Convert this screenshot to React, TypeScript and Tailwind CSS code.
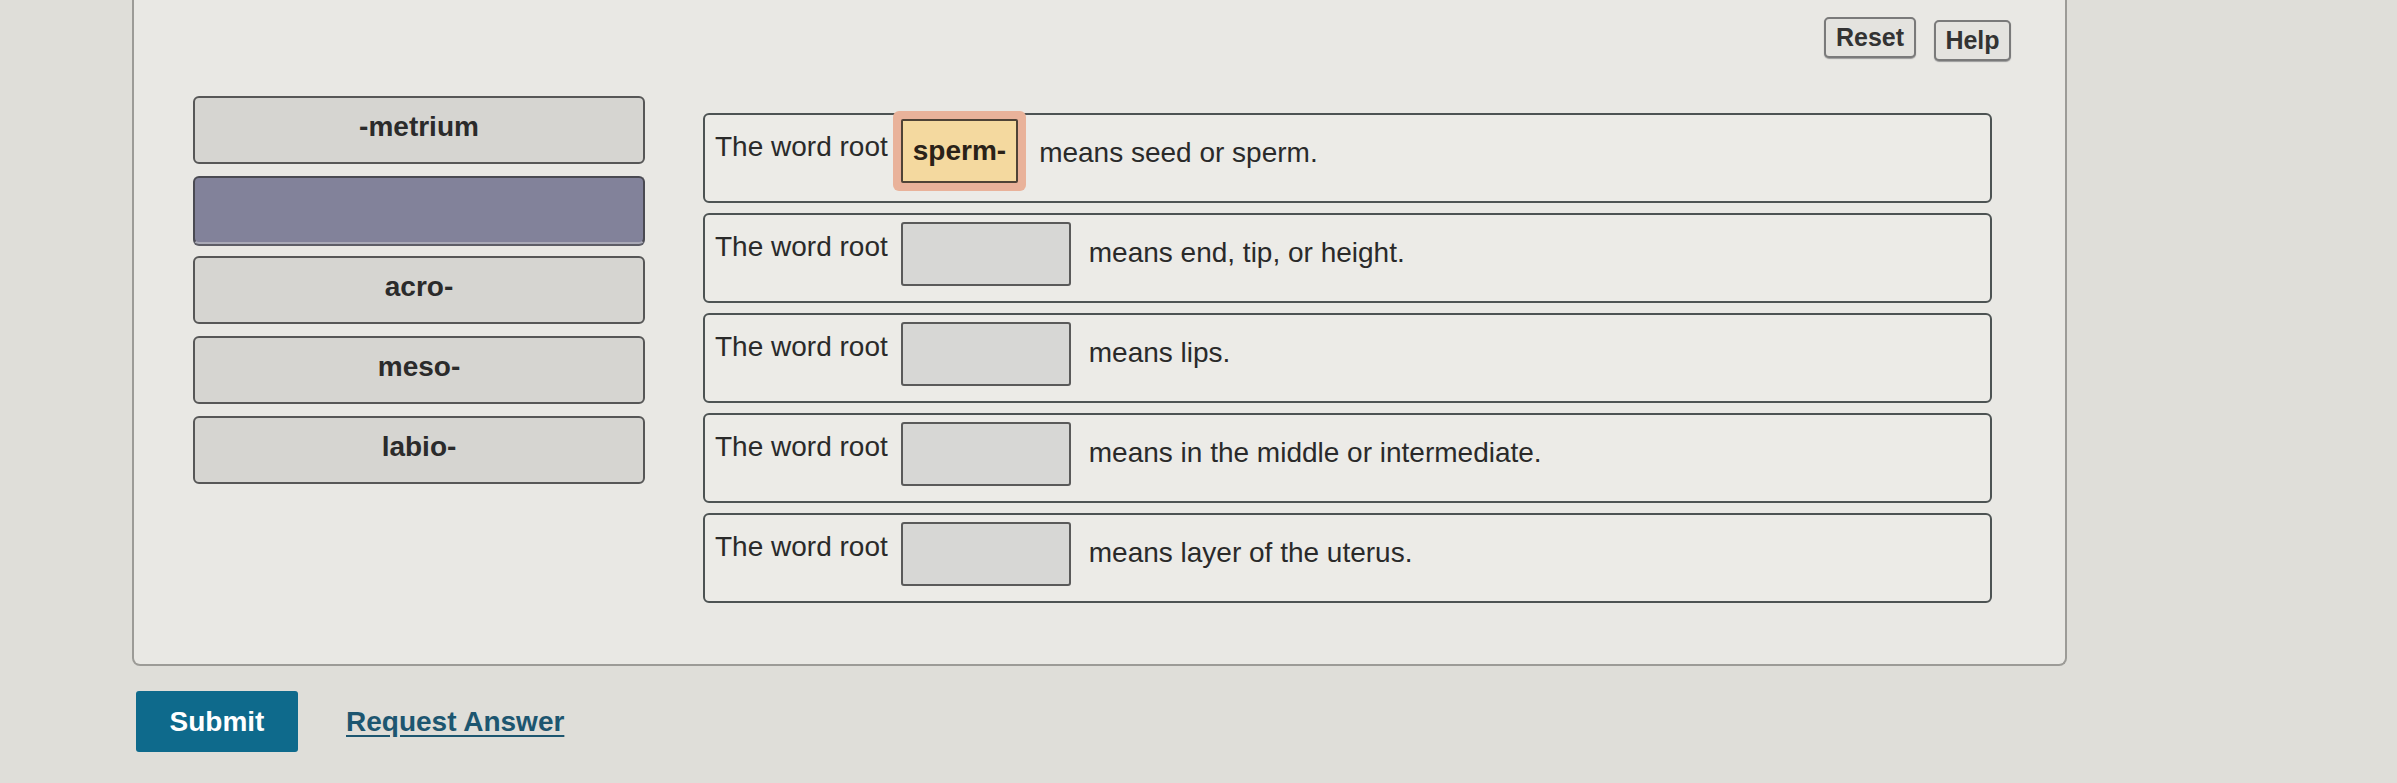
import React from "react";

const font = { fontFamily: '"Liberation Sans", Arial, Helvetica, sans-serif' };

function Tile({ label, dark }: { label?: string; dark?: boolean }) {
  if (dark) {
    return (
      <div className="h-[68px] w-[452px] rounded-[6px] border-2 border-[#4a4a52] border-b-[#a9a9b6] bg-[#82829a] shadow-[0_2px_0_#5d5d66]" />
    );
  }
  return (
    <div className="flex h-[68px] w-[452px] justify-center rounded-[6px] border-2 border-[#575757] bg-[#d6d5d1] pt-[13px] text-[28px] font-bold leading-[32px] text-[#2b2b2b]">
      {label}
    </div>
  );
}

function Row({ text, chip }: { text: string; chip?: string }) {
  return (
    <div className="flex h-[90px] w-[1289px] items-start rounded-[6px] border-2 border-[#4d5353] bg-[#ecebe7] pl-[10px] text-[28px] leading-[32px] text-[#2a2a2a]">
      <span className="mt-[16px] whitespace-nowrap">The word root</span>
      {chip ? (
        <div className="ml-[5px] mt-[-4px] rounded-[6px] bg-[#e9b29a] p-[8px]">
          <div className="flex h-[64px] items-center rounded-[2px] border-2 border-[#4f4336] bg-[#f4d99f] px-[10px] font-bold text-[#2a2218]">
            {chip}
          </div>
        </div>
      ) : (
        <div className="ml-[13px] mt-[7px] h-[64px] w-[170px] rounded-[3px] border-2 border-[#5a5a5a] bg-[#d7d7d5]" />
      )}
      <span className={(chip ? "ml-[13px]" : "ml-[18px]") + " mt-[22px] whitespace-nowrap"}>{text}</span>
    </div>
  );
}

export default function App() {
  return (
    <div className="h-[783px] w-[2397px] overflow-hidden bg-[#dfded9]" style={font}>
      <div className="ml-[132px] h-[666px] w-[1935px] rounded-b-[8px] border-x-2 border-b-2 border-[#9c9b97] bg-[#e9e8e4] pt-[17px]">
        <div className="flex justify-end gap-[18px] pr-[54px]">
          <button className="h-[41px] w-[92px] rounded-[5px] border-2 border-[#7a7a7a] bg-[#e4e3df] text-[25px] font-bold text-[#333] shadow-[0_1px_1px_#999]">
            Reset
          </button>
          <button className="mt-[3px] h-[41px] w-[77px] rounded-[5px] border-2 border-[#7a7a7a] bg-[#e4e3df] text-[25px] font-bold text-[#333] shadow-[0_1px_1px_#999]">
            Help
          </button>
        </div>
        <div className="mt-[35px] flex">
          <div className="ml-[59px] flex flex-col gap-[12px]">
            <Tile label="-metrium" />
            <Tile dark />
            <Tile label="acro-" />
            <Tile label="meso-" />
            <Tile label="labio-" />
          </div>
          <div className="ml-[58px] mt-[17px] flex flex-col gap-[10px]">
            <Row text="means seed or sperm." chip="sperm-" />
            <Row text="means end, tip, or height." />
            <Row text="means lips." />
            <Row text="means in the middle or intermediate." />
            <Row text="means layer of the uterus." />
          </div>
        </div>
      </div>
      <div className="ml-[136px] mt-[25px] flex items-center">
        <button className="h-[61px] w-[162px] rounded-[3px] bg-[#0e6a8c] text-[28px] font-bold text-white">
          Submit
        </button>
        <a className="ml-[48px] text-[28px] font-bold text-[#1d5670] underline underline-offset-[4px]" href="#">
          Request Answer
        </a>
      </div>
    </div>
  );
}
